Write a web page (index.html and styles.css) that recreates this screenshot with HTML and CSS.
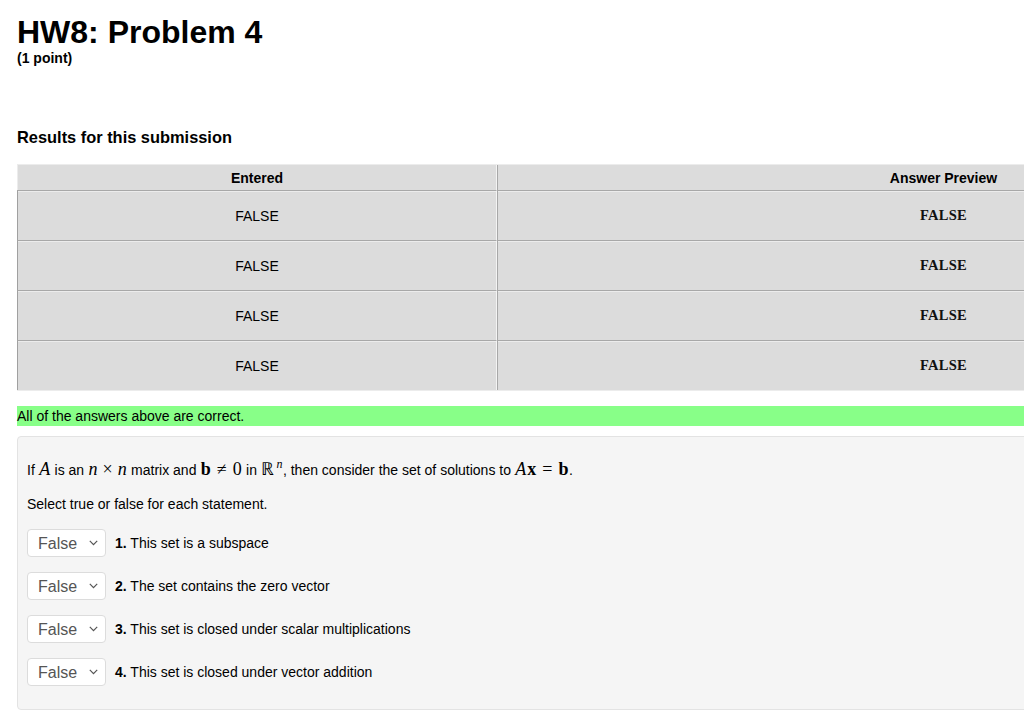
FILE: index.html
```html
<!DOCTYPE html>
<html lang="en">
<head>
<meta charset="utf-8">
<title>HW8: Problem 4</title>
<link rel="stylesheet" href="styles.css">
</head>
<body>
<div class="page">
  <h1 class="title">HW8: Problem 4</h1>
  <div class="points">(1 point)</div>

  <h2 class="results-heading">Results for this submission</h2>

  <table class="results">
    <thead>
      <tr><th class="c1">Entered</th><th class="c2">Answer Preview</th></tr>
    </thead>
    <tbody>
      <tr><td class="c1">FALSE</td><td class="c2"><span class="tt">FALSE</span></td></tr>
      <tr><td class="c1">FALSE</td><td class="c2"><span class="tt">FALSE</span></td></tr>
      <tr><td class="c1">FALSE</td><td class="c2"><span class="tt">FALSE</span></td></tr>
      <tr><td class="c1">FALSE</td><td class="c2"><span class="tt">FALSE</span></td></tr>
    </tbody>
  </table>

  <div class="correct">All of the answers above are correct.</div>

  <div class="problem">
    <p class="text">If <span class="m i">A</span> is an <span class="m i">n</span><span class="m op">×</span><span class="m i">n</span> matrix and <span class="m b">b</span><span class="m rel">≠</span><span class="m">0</span> in <span class="m">ℝ<sup class="i">n</sup></span>, then consider the set of solutions to <span class="m i">A</span><span class="m b">x</span><span class="m rel">=</span><span class="m b">b</span>.</p>
    <p class="text">Select true or false for each statement.</p>

    <div class="items">
      <div class="item">
        <span class="sel-wrap"><select class="sel"><option>False</option><option>True</option><option>?</option></select><svg class="chev" width="9" height="6" viewBox="0 0 9 6"><path d="M0.8 0.8 L4.5 4.6 L8.2 0.8" fill="none" stroke="#555" stroke-width="1.2"/></svg></span>
        <span class="label"><b>1.</b> This set is a subspace</span>
      </div>
      <div class="item">
        <span class="sel-wrap"><select class="sel"><option>False</option><option>True</option><option>?</option></select><svg class="chev" width="9" height="6" viewBox="0 0 9 6"><path d="M0.8 0.8 L4.5 4.6 L8.2 0.8" fill="none" stroke="#555" stroke-width="1.2"/></svg></span>
        <span class="label"><b>2.</b> The set contains the zero vector</span>
      </div>
      <div class="item">
        <span class="sel-wrap"><select class="sel"><option>False</option><option>True</option><option>?</option></select><svg class="chev" width="9" height="6" viewBox="0 0 9 6"><path d="M0.8 0.8 L4.5 4.6 L8.2 0.8" fill="none" stroke="#555" stroke-width="1.2"/></svg></span>
        <span class="label"><b>3.</b> This set is closed under scalar multiplications</span>
      </div>
      <div class="item">
        <span class="sel-wrap"><select class="sel"><option>False</option><option>True</option><option>?</option></select><svg class="chev" width="9" height="6" viewBox="0 0 9 6"><path d="M0.8 0.8 L4.5 4.6 L8.2 0.8" fill="none" stroke="#555" stroke-width="1.2"/></svg></span>
        <span class="label"><b>4.</b> This set is closed under vector addition</span>
      </div>
    </div>
  </div>
</div>
</body>
</html>
```

FILE: styles.css
```css
html, body {
  margin: 0;
  padding: 0;
  overflow: hidden;
  background: #fff;
}
body {
  font-family: "Liberation Sans", Arial, sans-serif;
  font-size: 14px;
  color: #000;
}
.page {
  width: 1372px;
  padding: 15px 0 0 17px;
}
.title {
  margin: 0;
  font-size: 32px;
  line-height: 34px;
  font-weight: bold;
}
.points {
  font-weight: bold;
  font-size: 14px;
  line-height: 18px;
}
.results-heading {
  margin: 60px 0 17px 0;
  font-size: 16.4px;
  line-height: 20px;
  font-weight: bold;
}
.results {
  width: 1372px;
  border-collapse: separate;
  border-spacing: 0;
  background: #dcdcdc;
  border-top: 1px solid #ececec;
  border-bottom: 1px solid #ececec;
}
.results th, .results td {
  text-align: center;
  vertical-align: middle;
  padding: 0;
}
.results th {
  height: 25px;
  font-weight: bold;
}
.results td {
  height: 49px;
  border-top: 1px solid #a8a8a8;
  box-shadow: inset 0 1px 0 #ececec;
}
.results .c1 {
  width: 478px;
  border-right: 1px solid #f4f4f4;
  border-left: 1px solid #ececec;
}
.results td.c1 {
  border-left: 1px solid #a0a0a0;
}
.results .c2 {
  border-left: 1px solid #a8a8a8;
}
.tt {
  font-family: "Liberation Serif", "Times New Roman", serif;
  font-size: 14.5px;
  font-weight: 600;
  letter-spacing: 0.3px;
  color: #111;
}
.correct {
  margin-top: 15px;
  background: #88ff88;
  height: 20px;
  line-height: 20px;
}
.problem {
  margin-top: 10px;
  background: #f5f5f5;
  border: 1px solid #e3e3e3;
  border-radius: 4px;
  padding: 22px 10px 23px 9px;
}
.text {
  margin: 0 0 14px 0;
  line-height: 20px;
}
.text:last-of-type {
  margin-bottom: 15px;
}
.m {
  font-family: "Liberation Serif", "Times New Roman", serif;
  font-size: 18px;
  margin: 0 0.5px;
}
.m.i, .i {
  font-style: italic;
}
.m.b {
  font-weight: bold;
}
.m.op {
  padding: 0 4px;
}
.m.rel {
  padding: 0 5px;
}
.m sup {
  font-size: 12px;
  line-height: 0;
  padding-left: 2px;
}
.items {
  display: flex;
  flex-direction: column;
  gap: 15px;
}
.item {
  display: flex;
  align-items: center;
  gap: 9px;
  height: 28px;
}
.sel-wrap {
  position: relative;
  display: inline-block;
  width: 79px;
  height: 28px;
}
.sel {
  appearance: none;
  -webkit-appearance: none;
  width: 79px;
  height: 28px;
  box-sizing: border-box;
  border: 1px solid #dcdcdc;
  border-radius: 4px;
  background: #fff;
  font-family: "Liberation Sans", Arial, sans-serif;
  font-size: 16px;
  color: #555;
  padding: 0 0 0 10px;
  margin: 0;
}
.chev {
  position: absolute;
  left: 62px;
  top: 11px;
  pointer-events: none;
}
.label {
  line-height: 20px;
}
.label b {
  font-weight: bold;
}
```
